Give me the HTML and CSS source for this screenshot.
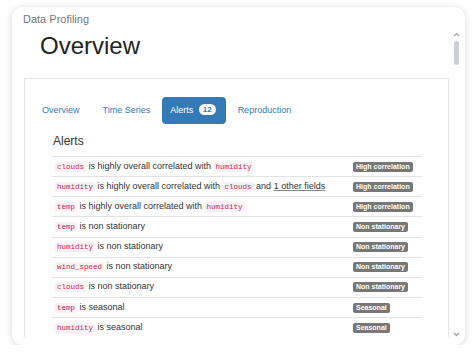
FILE: index.html
```html
<!DOCTYPE html>
<html lang="en">
  <head>
    <meta charset="UTF-8" />
    <meta name="viewport" content="width=device-width, initial-scale=1.0" />
    <title>Data Profiling</title>
    <link rel="stylesheet" href="styles.css">
  </head>
  <body>
    <div class="card">
      <div class="main">
        <div class="app-title">Data Profiling</div>
        <h1>Overview</h1>

        <div class="frame">
          <ul class="tabs">
            <li class="tab">Overview</li>
            <li class="tab">Time Series</li>
            <li class="tab active">Alerts <span class="count">12</span></li>
            <li class="tab">Reproduction</li>
          </ul>

          <div class="panel">
            <h2>Alerts</h2>
            <div class="alerts">
              <div class="row">
                <div><code>clouds</code> is highly overall correlated with <code>humidity</code></div>
                <div><span class="badge">High correlation</span></div>
              </div>
              <div class="row">
                <div><code>humidity</code> is highly overall correlated with <code>clouds</code> and <span class="more">1 other fields</span></div>
                <div><span class="badge">High correlation</span></div>
              </div>
              <div class="row">
                <div><code>temp</code> is highly overall correlated with <code>humidity</code></div>
                <div><span class="badge">High correlation</span></div>
              </div>
              <div class="row">
                <div><code>temp</code> is non stationary</div>
                <div><span class="badge">Non stationary</span></div>
              </div>
              <div class="row">
                <div><code>humidity</code> is non stationary</div>
                <div><span class="badge">Non stationary</span></div>
              </div>
              <div class="row">
                <div><code>wind_speed</code> is non stationary</div>
                <div><span class="badge">Non stationary</span></div>
              </div>
              <div class="row">
                <div><code>clouds</code> is non stationary</div>
                <div><span class="badge">Non stationary</span></div>
              </div>
              <div class="row">
                <div><code>temp</code> is seasonal</div>
                <div><span class="badge">Seasonal</span></div>
              </div>
              <div class="row">
                <div><code>humidity</code> is seasonal</div>
                <div><span class="badge">Seasonal</span></div>
              </div>
            </div>
          </div>
        </div>
      </div>

      <div class="scrollbar">
        <svg class="arrow" width="7" height="5" viewBox="0 0 7 5"><path d="M1 4 L3.5 1.5 L6 4" fill="none" stroke="#9aa0a6" stroke-width="1.2"/></svg>
        <div class="thumb"></div>
        <div class="track"></div>
        <svg class="arrow" width="7" height="5" viewBox="0 0 7 5"><path d="M1 1 L3.5 3.5 L6 1" fill="none" stroke="#9aa0a6" stroke-width="1.2"/></svg>
      </div>
    </div>
  </body>
</html>
```

FILE: styles.css
```css
body {
  font-family: "Liberation Sans", Arial, sans-serif;
  margin: 0;
  padding: 0;
  background: #fff;
  color: #333;
}
.card {
  margin: 7px 0 0 12px;
  width: 453px;
  height: 338px;
  box-sizing: border-box;
  background: #fff;
  border-radius: 10px;
  box-shadow: 0 1px 7px rgba(0, 0, 0, 0.16);
  display: flex;
  padding-bottom: 8px;
}
.main {
  flex: 1;
  overflow: hidden;
  padding: 6px 0 0 12px;
}
.app-title {
  font-size: 11px;
  line-height: 13px;
  color: #777;
  margin-left: -1px;
}
h1 {
  margin: 6px 0 0 16px;
  font-size: 24px;
  line-height: 28px;
  font-weight: normal;
  color: #222;
}
.frame {
  margin-top: 18px;
  width: 425px;
  box-sizing: border-box;
  border: 1px solid #e6e6e6;
  border-bottom: none;
  padding-top: 18px;
}
.tabs {
  list-style: none;
  margin: 0;
  padding: 0 0 0 9px;
  display: flex;
  gap: 4px;
}
.tab {
  font-size: 9px;
  line-height: 27px;
  padding: 0 8px;
  color: #337ab7;
  border-radius: 4px;
}
.tab:first-child {
  margin-right: 3px;
}
.tab.active {
  background: #337ab7;
  color: #fff;
  padding-right: 10px;
}
.count {
  display: inline-block;
  margin-left: 3px;
  background: #fff;
  color: #337ab7;
  font-weight: bold;
  font-size: 8px;
  line-height: 11px;
  padding: 0 4px;
  border-radius: 6px;
  vertical-align: 1px;
}
.panel {
  padding: 10px 26px 0 27px;
}
h2 {
  margin: 0 0 8px 1px;
  font-size: 12px;
  line-height: 14px;
  font-weight: normal;
  color: #333;
}
.row {
  display: grid;
  grid-template-columns: 1fr 72px;
  align-items: center;
  height: 20.15px;
  box-sizing: border-box;
  border-top: 1px solid #e2e2e2;
  font-size: 9px;
  line-height: 13px;
}
.row > div {
  padding: 0 3px;
  white-space: nowrap;
  display: flex;
  align-items: center;
}
.row > div:first-child {
  display: block;
}
code {
  font-family: "Liberation Mono", "Courier New", monospace;
  font-size: 7.5px;
  color: #c7254e;
  background: #f9f2f4;
  padding: 1px 2px;
  border-radius: 2px;
}
.more {
  text-decoration: underline;
  text-decoration-color: #888;
}
.badge {
  background: #777;
  color: #fff;
  font-weight: bold;
  font-size: 7px;
  line-height: 10px;
  padding: 0 3px;
  border-radius: 2px;
}
.scrollbar {
  width: 16px;
  display: flex;
  flex-direction: column;
  align-items: center;
  padding: 25px 2px 0 0;
  box-sizing: border-box;
}
.thumb {
  width: 5px;
  height: 24px;
  margin-top: 4px;
  background: #ccd0d4;
  border-radius: 3px;
}
.track {
  flex: 1;
}
.arrow {
  display: block;
}
```
